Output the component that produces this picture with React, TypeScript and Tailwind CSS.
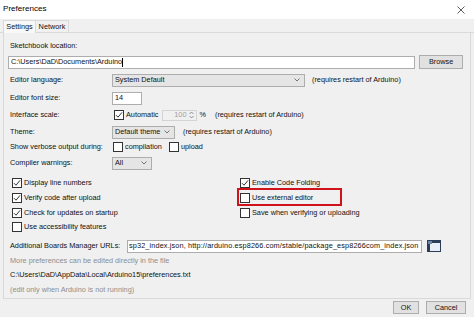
import React from 'react';

const Check = ({ checked }: { checked?: boolean }) => (
  <span className="w-[10px] h-[10px] border border-[#333333] bg-white flex items-center justify-center shrink-0">
    {checked && (
      <svg width="8" height="8" viewBox="0 0 8 8">
        <path d="M1 4.2 L3 6.2 L7 1.4" fill="none" stroke="#333333" strokeWidth="1" />
      </svg>
    )}
  </span>
);

const Chevron = () => (
  <svg width="6" height="4" viewBox="0 0 6 4" className="shrink-0">
    <path d="M0.5 0.5 L3 3 L5.5 0.5" fill="none" stroke="#666666" strokeWidth="0.9" />
  </svg>
);

const Dropdown = ({ text, w }: { text: string; w: string }) => (
  <div className={`${w} h-[13px] bg-[#e5e5e5] border border-[#adadad] flex items-center justify-between pl-[2px] pr-[4px]`}>
    <span>{text}</span>
    <Chevron />
  </div>
);

const CheckRow = ({ label, checked, h }: { label: string; checked?: boolean; h: string }) => (
  <div className={`flex items-center gap-[2px] ${h}`}>
    <Check checked={checked} />
    <span>{label}</span>
  </div>
);

export default function App() {
  return (
    <div
      className="w-[474px] h-[317px] bg-[#f0f0f0] flex flex-col overflow-hidden text-[7.3px] text-[#111111] leading-none whitespace-nowrap"
      style={{ fontFamily: '"Liberation Sans", Arial, sans-serif' }}
    >
      {/* title bar */}
      <div className="h-[19px] bg-white flex items-center justify-between pl-[3px] pr-[9px] shrink-0">
        <span className="text-[8.1px] text-black">Preferences</span>
        <svg width="8" height="8" viewBox="0 0 8 8">
          <path d="M0.5 0.5 L7.5 7.5 M7.5 0.5 L0.5 7.5" stroke="#333" strokeWidth="0.8" />
        </svg>
      </div>

      {/* tabs */}
      <div className="h-[14px] flex items-end px-[3px] shrink-0 border-b border-[#d9d9d9]">
        <div className="h-[13px] w-[33px] bg-[#f8f8f8] border border-b-0 border-[#d9d9d9] flex items-center justify-center -mb-px relative">
          Settings
        </div>
        <div className="h-[12px] w-[33px] border border-l-0 border-b-0 border-[#d9d9d9] flex items-center justify-center">
          Network
        </div>
      </div>

      {/* panel */}
      <div className="mx-[3px] h-[266px] border border-t-0 border-[#d9d9d9] pl-[6px] pr-[7px] flex flex-col shrink-0">
        <div className="flex items-center h-[14px] mt-[6px]">Sketchbook location:</div>

        <div className="flex items-center h-[14px] mt-[2px]">
          <div className="ml-[-2px] w-[408px] h-[13px] bg-white border border-[#adadad] flex items-center pl-[2px]">
            C:\Users\DaD\Documents\Arduino
            <span className="w-px h-[9px] bg-black" />
          </div>
          <div className="ml-[4px] w-[44px] h-[14px] bg-[#e1e1e1] border border-[#adadad] flex items-center justify-center">
            Browse
          </div>
        </div>

        <div className="flex items-center h-[14px] mt-[4px]">
          <span className="w-[102px]">Editor language:</span>
          <Dropdown text="System Default" w="w-[193px]" />
          <span className="ml-[7px]">(requires restart of Arduino)</span>
        </div>

        <div className="flex items-center h-[14px] mt-[4px]">
          <span className="w-[102px]">Editor font size:</span>
          <div className="w-[30px] h-[13px] bg-white border border-[#adadad] flex items-center pl-[2px]">14</div>
        </div>

        <div className="flex items-center h-[14px] mt-[3px]">
          <span className="w-[104px]">Interface scale:</span>
          <Check checked />
          <span className="ml-[2px]">Automatic</span>
          <div className="ml-[4px] w-[35px] h-[11px] border border-[#d4d4d4] flex items-center justify-end pr-[2px] gap-[3px] text-[#a0a0a0]">
            <span>100</span>
            <svg width="5" height="8" viewBox="0 0 5 8">
              <path d="M0.5 3 L2.5 1 L4.5 3 M0.5 5 L2.5 7 L4.5 5" fill="none" stroke="#777" strokeWidth="0.8" />
            </svg>
          </div>
          <span className="ml-[2px]">%</span>
          <span className="ml-[9px]">(requires restart of Arduino)</span>
        </div>

        <div className="flex items-center h-[14px] mt-[3px]">
          <span className="w-[102px]">Theme:</span>
          <Dropdown text="Default theme" w="w-[63px]" />
          <span className="ml-[8px]">(requires restart of Arduino)</span>
        </div>

        <div className="flex items-center h-[14px] mt-[1px]">
          <span className="w-[103px]">Show verbose output during:</span>
          <Check />
          <span className="ml-[2px]">compilation</span>
          <span className="ml-[7px]" />
          <Check />
          <span className="ml-[2px]">upload</span>
        </div>

        <div className="flex items-center h-[14px] mt-[2px]">
          <span className="w-[102px]">Compiler warnings:</span>
          <Dropdown text="All" w="w-[40px]" />
        </div>

        <div className="grid grid-cols-[228px_1fr] mt-[6px] pl-[2px]">
          <div className="flex flex-col">
            <CheckRow label="Display line numbers" checked h="h-[14px]" />
            <CheckRow label="Verify code after upload" checked h="h-[15px]" />
            <CheckRow label="Check for updates on startup" checked h="h-[15px]" />
            <CheckRow label="Use accessibility features" h="h-[14px]" />
          </div>
          <div className="flex flex-col">
            <CheckRow label="Enable Code Folding" checked h="h-[14px]" />
            <div className="relative">
              <CheckRow label="Use external editor" h="h-[15px]" />
              <div className="absolute left-[-3px] top-[-2px] w-[105px] h-[18px] border-2 border-[#d0121b]" />
            </div>
            <CheckRow label="Save when verifying or uploading" h="h-[15px]" />
          </div>
        </div>

        <div className="flex items-center h-[14px] mt-[5px]">
          <span className="w-[117px]">Additional Boards Manager URLs:</span>
          <div className="w-[295px] h-[13px] bg-white border border-[#adadad] flex items-center overflow-hidden pl-px tracking-[0.13px]">
            sp32_index.json, http://arduino.esp8266.com/stable/package_esp8266com_index.json
          </div>
          <svg width="14" height="12" viewBox="0 0 14 12" className="ml-[5px]">
            <rect x="0" y="0" width="14" height="12" fill="#2b3d57" />
            <rect x="3" y="3" width="10" height="8" fill="#e8eef5" />
            <rect x="1" y="1" width="4" height="3" fill="#6d86a8" />
          </svg>
        </div>

        <div className="flex items-center h-[14px] mt-[1px] text-[#8e8e8e]">More preferences can be edited directly in the file</div>
        <div className="flex items-center h-[14px]">C:\Users\DaD\AppData\Local\Arduino15\preferences.txt</div>
        <div className="flex items-center h-[15px] text-[#8e8e8e]">(edit only when Arduino is not running)</div>
      </div>

      {/* footer */}
      <div className="flex-1 flex items-start justify-end pt-[2px] pr-[8px] gap-[7px]">
        <div className="w-[26px] h-[13px] bg-[#e1e1e1] border border-[#adadad] flex items-center justify-center">OK</div>
        <div className="w-[40px] h-[13px] bg-[#e1e1e1] border border-[#adadad] flex items-center justify-center">Cancel</div>
      </div>
    </div>
  );
}
